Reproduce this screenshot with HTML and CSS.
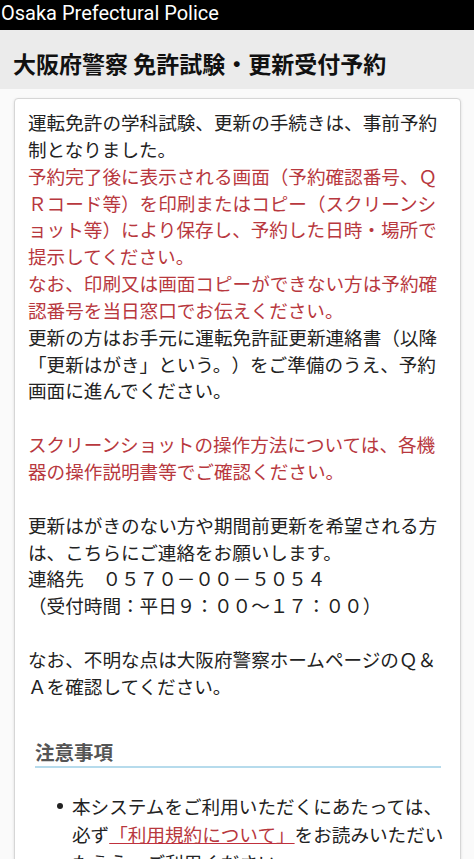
FILE: index.html
```html
<!DOCTYPE html>
<html lang="ja">
<head>
<meta charset="utf-8">
<title>大阪府警察 免許試験・更新受付予約</title>
<link rel="stylesheet" href="styles.css">
</head>
<body>
<div class="topbar">Osaka Prefectural Police</div>
<header class="pagehead">
  <h1>大阪府警察 免許試験・更新受付予約</h1>
</header>
<main class="card">
  <div class="body">
    <p>運転免許の学科試験、更新の手続きは、事前予約制となりました。</p>
    <p class="red">予約完了後に表示される画面（予約確認番号、ＱＲコード等）を印刷またはコピー（スクリーンショット等）により保存し、予約した日時・場所で提示してください。</p>
    <p class="red">なお、印刷又は画面コピーができない方は予約確認番号を当日窓口でお伝えください。</p>
    <p>更新の方はお手元に運転免許証更新連絡書（以降「更新はがき」という。）をご準備のうえ、予約画面に進んでください。</p>
    <p class="red gap">スクリーンショットの操作方法については、各機器の操作説明書等でご確認ください。</p>
    <p class="gap">更新はがきのない方や期間前更新を希望される方は、こちらにご連絡をお願いします。<br>連絡先　０５７０－００－５０５４<br>（受付時間：平日９：００～１７：００）</p>
    <p class="gap">なお、不明な点は大阪府警察ホームページのＱ＆Ａを確認してください。</p>
  </div>
  <section class="notice">
    <h2>注意事項</h2>
    <ul>
      <li>本システムをご利用いただくにあたっては、必ず<a href="#" class="link">「利用規約について」</a>をお読みいただいたうえ、ご利用ください。</li>
    </ul>
  </section>
</main>
</body>
</html>
```
FILE: styles.css
```css
html, body {
  margin: 0;
  padding: 0;
}
body {
  background: #fafafa;
  font-family: "Noto Sans CJK JP", "Noto Sans", sans-serif;
  color: #222;
  text-spacing-trim: space-all;
}
.topbar {
  background: #000;
  color: #fff;
  height: 30px;
  font-family: Roboto, "Liberation Sans", sans-serif;
  font-size: 20px;
  line-height: 27px;
  padding-left: 1px;
}
.pagehead {
  background: #ebebeb;
  height: 59px;
  box-sizing: border-box;
  padding: 18px 13px 0;
}
.pagehead h1 {
  margin: 0;
  font-size: 23px;
  line-height: 30px;
  font-weight: bold;
  color: #111;
}
.card {
  display: block;
  margin: 9px 13px 0 14px;
  background: #fff;
  border: 1px solid #d6d6d6;
  border-radius: 4px;
  box-shadow: 0 1px 3px rgba(0, 0, 0, 0.12);
  padding: 10px 13px 20px;
}
.body p {
  margin: 0;
  font-size: 18.6px;
  line-height: 26.85px;
  line-break: loose;
}
.body .red {
  color: #b8383e;
}
.body .gap {
  margin-top: 26.85px;
}
.notice {
  margin-top: 38.5px;
}
.notice h2 {
  margin: 0 6px 0 7px;
  font-size: 19.5px;
  line-height: 28px;
  font-weight: bold;
  color: #555;
  border-bottom: 2px solid #b6dbec;
}
.notice ul {
  margin: 24px 0 0;
  padding-left: 44px;
  list-style: none;
}
.notice li {
  position: relative;
  font-size: 18.6px;
  line-height: 28px;
  line-break: loose;
}
.notice li::before {
  content: "";
  position: absolute;
  left: -15px;
  top: 11px;
  width: 6px;
  height: 6px;
  border-radius: 50%;
  background: #222;
}
.link {
  color: #b8383e;
  text-decoration: underline;
  text-decoration-color: #c0303c;
}
```
